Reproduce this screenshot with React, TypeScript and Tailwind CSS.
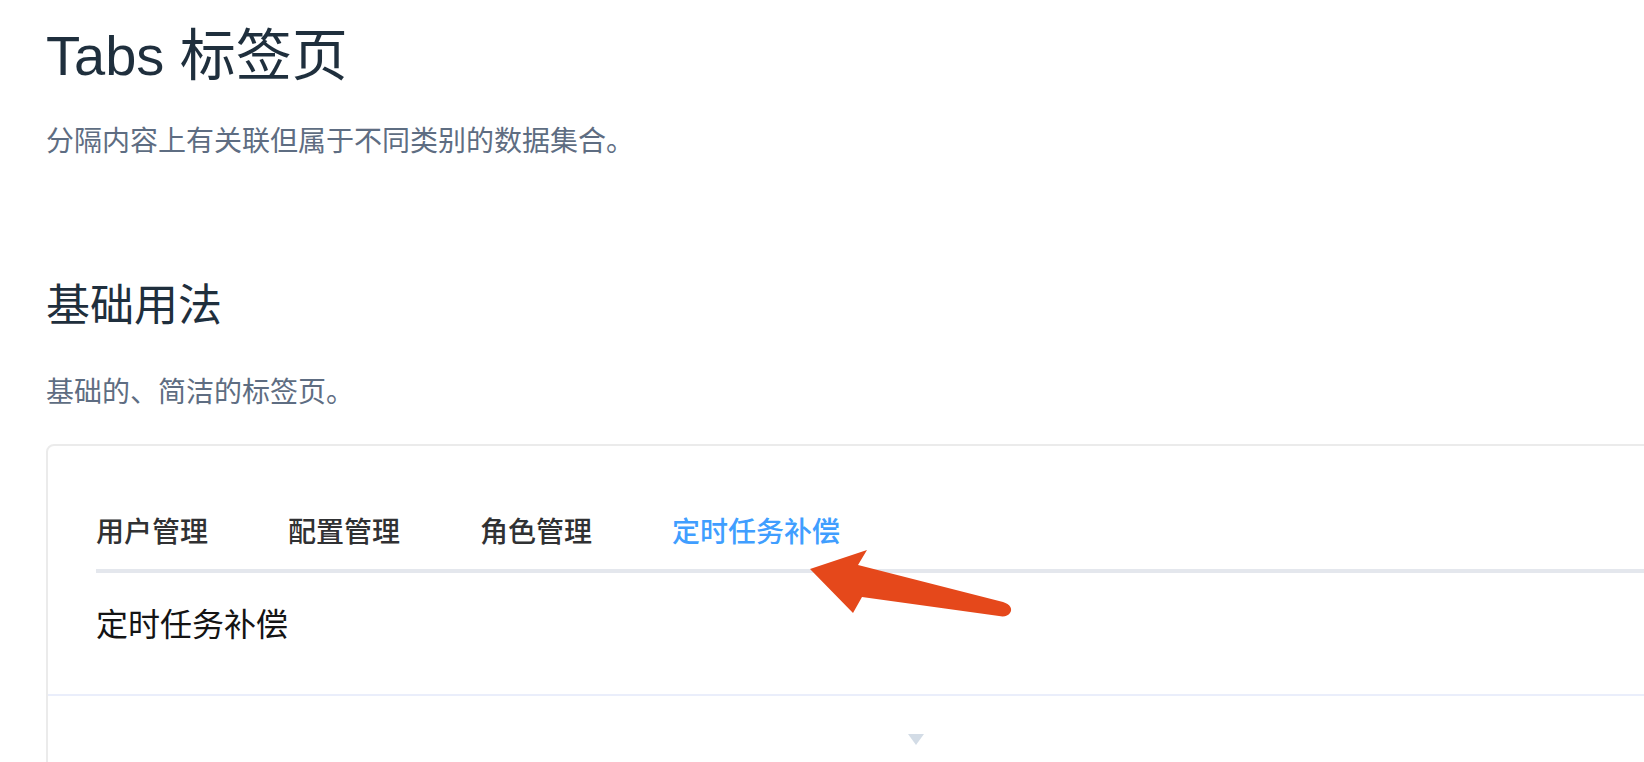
import React from "react";

const tabs = ["用户管理", "配置管理", "角色管理", "定时任务补偿"];

export default function App() {
  const active = 3;
  return (
    <div className="relative h-[762px] w-full overflow-hidden bg-white font-['Liberation_Sans','Noto_Sans_CJK_SC',sans-serif]">
      <div className="w-[1786px] pl-[46px] pt-[24px]">
        <h1 className="text-[56px] font-normal leading-[64px] text-[#1f2f3d]">Tabs 标签页</h1>
        <p className="mt-[33px] text-[28px] leading-[42px] text-[#5e6d82]">
          分隔内容上有关联但属于不同类别的数据集合。
        </p>
        <h2 className="mt-[113px] text-[44px] font-normal leading-[60px] text-[#1f2f3d]">基础用法</h2>
        <p className="mt-[36px] text-[28px] leading-[42px] text-[#5e6d82]">基础的、简洁的标签页。</p>

        <div className="mt-[30px] w-[1740px] rounded-[8px] border-2 border-[#ebebeb]">
          <div className="px-[48px] pb-[45px] pt-[47px]">
            <div className="relative">
              <div className="flex">
                {tabs.map((t, i) => (
                  <div
                    key={t}
                    className={
                      "h-[80px] text-[28px] font-medium leading-[80px] " +
                      (i === 0 ? "pr-[40px] " : i === tabs.length - 1 ? "pl-[40px] " : "px-[40px] ") +
                      (i === active ? "text-[#409eff]" : "text-[#303133]")
                    }
                  >
                    {t}
                  </div>
                ))}
              </div>
              <div className="absolute bottom-0 left-0 right-0 h-[4px] bg-[#e4e7ed]" />
            </div>
            <div className="mt-[28px] text-[32px] leading-[48px] text-[#141414]">定时任务补偿</div>
          </div>
          <div className="flex h-[88px] items-center justify-center border-t-2 border-[#eaeefb]">
            <svg width="16" height="11" viewBox="0 0 16 11">
              <path d="M0 0 L16 0 L8 11 Z" fill="#d3dce6" />
            </svg>
          </div>
        </div>
      </div>

      <svg
        className="pointer-events-none absolute left-0 top-0"
        width="1644"
        height="762"
        viewBox="0 0 1644 762"
      >
        <path
          d="M810 569 L867 550 L858 565 L1003 602 C1010 604 1013 609 1010 613 C1008 616 1004 617 999 616 L862 597 L853 613 Z"
          fill="#e5481b"
        />
      </svg>
    </div>
  );
}
